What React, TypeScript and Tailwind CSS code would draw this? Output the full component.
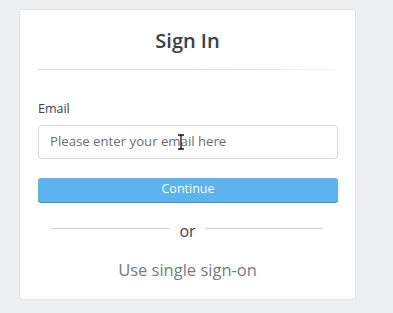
import React from "react";

export default function App() {
  return (
    <div
      className="w-[393px] h-[313px] bg-[#eeeff0] pt-[9px] pl-[19px]"
      style={{ fontFamily: '"Open Sans", "Noto Sans", sans-serif' }}
    >
      <div className="w-[337px] h-[291px] bg-white border border-[#e2e3e5] rounded-[3px] flex flex-col">
        <div className="h-[59px] flex items-center justify-center pt-[2px]">
          <h1 className="text-[20px] leading-none text-[#3a404a] font-semibold">Sign In</h1>
        </div>
        <div className="mx-[18px] h-px bg-gradient-to-r from-[#dcdde0] via-[#dcdde0] to-[#f4f4f5]" />
        <div className="px-[18px] pt-[33px]">
          <label className="block text-[12.5px] leading-none text-[#3c424c]">Email</label>
          <div className="relative mt-[9px] w-[300px] h-[34px] border border-[#d8d9dc] rounded-[3px] flex items-center pl-[11px]">
            <span className="text-[13.2px] text-[#6b6f75]">Please enter your email here</span>
            <svg className="absolute left-[138px] top-[8px]" width="8" height="16" viewBox="0 0 8 16">
              <path d="M1 1h6M4 1v14M1 15h6" stroke="#111" strokeWidth="1.3" fill="none" />
            </svg>
          </div>
          <button className="mt-[19px] w-[300px] h-[24px] rounded-[3px] bg-[#5db2f0] shadow-[0_1px_0_#4f8fc0] text-white text-[12.5px] leading-none flex items-center justify-center">
            Continue
          </button>
        </div>
        <div className="mt-[21px] flex items-center justify-center gap-[9px] px-[32px]">
          <div className="flex-1 h-px bg-[#cdd0d4]" />
          <span className="text-[16px] leading-none text-[#3c424c] pb-[1px] -mb-[6px]">or</span>
          <div className="flex-1 h-px bg-[#cdd0d4]" />
        </div>
        <div className="mt-[28px] text-center text-[16.5px] leading-none text-[#777a7f]">
          Use single sign-on
        </div>
      </div>
    </div>
  );
}
